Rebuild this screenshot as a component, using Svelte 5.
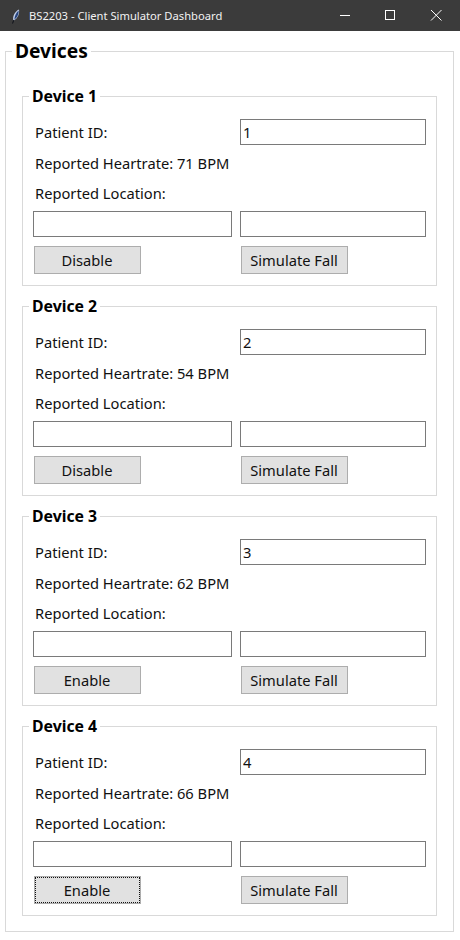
<script>
  const devices = [
    { id: 1, bpm: 71, action: 'Disable' },
    { id: 2, bpm: 54, action: 'Disable' },
    { id: 3, bpm: 62, action: 'Enable' },
    { id: 4, bpm: 66, action: 'Enable', focused: true }
  ];
</script>

<div class="window">
  <header class="titlebar">
    <svg class="feather" viewBox="0 0 12 16" width="12" height="16">
      <path d="M2.6 15.5 L4 11" stroke="#0c0f18" stroke-width="1" fill="none" />
      <path d="M3.2 12 C2.6 8 4.8 3.4 9 1.4 C9.6 5 8 10 4.2 12.2 Z" fill="#c3d0ea" />
      <path d="M4.4 11.6 C4.6 8.4 5.8 5 8.6 2.6 C9 6 7.2 9.8 4.4 11.6 Z" fill="#27457f" />
    </svg>
    <span class="title">BS2203 - Client Simulator Dashboard</span>
    <div class="controls">
      <svg viewBox="0 0 46 31" width="46" height="31"><path d="M19 15.5 H29" stroke="#fff" stroke-width="1" /></svg>
      <svg viewBox="0 0 46 31" width="46" height="31"><rect x="18.5" y="10.5" width="9" height="9" fill="none" stroke="#fff" /></svg>
      <svg viewBox="0 0 46 31" width="46" height="31"><path d="M18 10 L28.5 20.5 M28.5 10 L18 20.5" stroke="#fff" stroke-width="1" /></svg>
    </div>
  </header>

  <fieldset class="devices">
    <legend>Devices</legend>
    {#each devices as d}
      <fieldset class="device">
        <legend>Device {d.id}</legend>
        <div class="grid">
          <span class="label">Patient ID:</span>
          <input type="text" value={d.id} />
          <span class="label wide heartrate">Reported Heartrate: {d.bpm} BPM</span>
          <span class="label wide location">Reported Location:</span>
          <input type="text" />
          <input type="text" />
          <button class:focused={d.focused}>{d.action}</button>
          <button>Simulate Fall</button>
        </div>
      </fieldset>
    {/each}
  </fieldset>
</div>

<style>
  :global(body) {
    background: #fff;
  }

  .window {
    width: 460px;
    height: 940px;
    overflow: hidden;
    background: #fff;
    color: #111;
    font-family: "Noto Sans", sans-serif;
    font-size: 14.7px;
  }

  .titlebar {
    display: flex;
    align-items: center;
    height: 31px;
    background: #3b3b3b;
    color: #f2f2f2;
    font-size: 11.2px;
  }

  .feather {
    margin-left: 10px;
    margin-right: 7px;
  }

  .controls {
    display: flex;
    margin-left: auto;
    margin-right: 1px;
  }

  .controls svg {
    display: block;
  }

  fieldset {
    margin: 0;
    min-width: 0;
    box-sizing: border-box;
  }

  legend {
    font-weight: 700;
    color: #000;
  }

  .devices {
    width: 449px;
    height: 895px;
    margin: 6px 0 0 5px;
    padding: 0 16px;
    border: 1px solid #d9d9d9;
    display: flex;
    flex-direction: column;
  }

  .devices > legend {
    margin-left: -10px;
    padding: 0 3px;
    font-size: 19.2px;
    line-height: 28px;
  }

  .device {
    width: 415px;
    height: 201px;
    margin-top: 9px;
    padding: 0 10px;
    border: 1px solid #d9d9d9;
  }

  .device:first-of-type {
    margin-top: 20px;
  }

  .device > legend {
    margin-left: -4px;
    padding: 0 3px;
    font-size: 15.8px;
    line-height: 22px;
  }

  .grid {
    display: grid;
    grid-template-columns: 199px 186px;
    column-gap: 8px;
    margin-top: 12px;
  }

  .label {
    padding-left: 2px;
    line-height: 26px;
  }

  .wide {
    grid-column: 1 / -1;
    line-height: 30px;
  }

  .heartrate {
    margin-top: 3px;
  }

  input {
    box-sizing: border-box;
    height: 26px;
    margin: 0;
    padding: 0 2px;
    border: 1px solid #7a7a7a;
    border-radius: 0;
    background: #fff;
    color: #111;
    font: inherit;
    outline: none;
  }

  .location + input,
  .location + input + input {
    margin-top: 3px;
  }

  button {
    box-sizing: border-box;
    width: 107px;
    height: 28px;
    margin: 9px 0 0 1px;
    padding: 0 1px 0 0;
    border: 1px solid #adadad;
    border-radius: 0;
    background: #e1e1e1;
    color: #111;
    font: inherit;
  }

  button.focused {
    outline: 1px dotted #111;
    outline-offset: -2px;
  }
</style>
